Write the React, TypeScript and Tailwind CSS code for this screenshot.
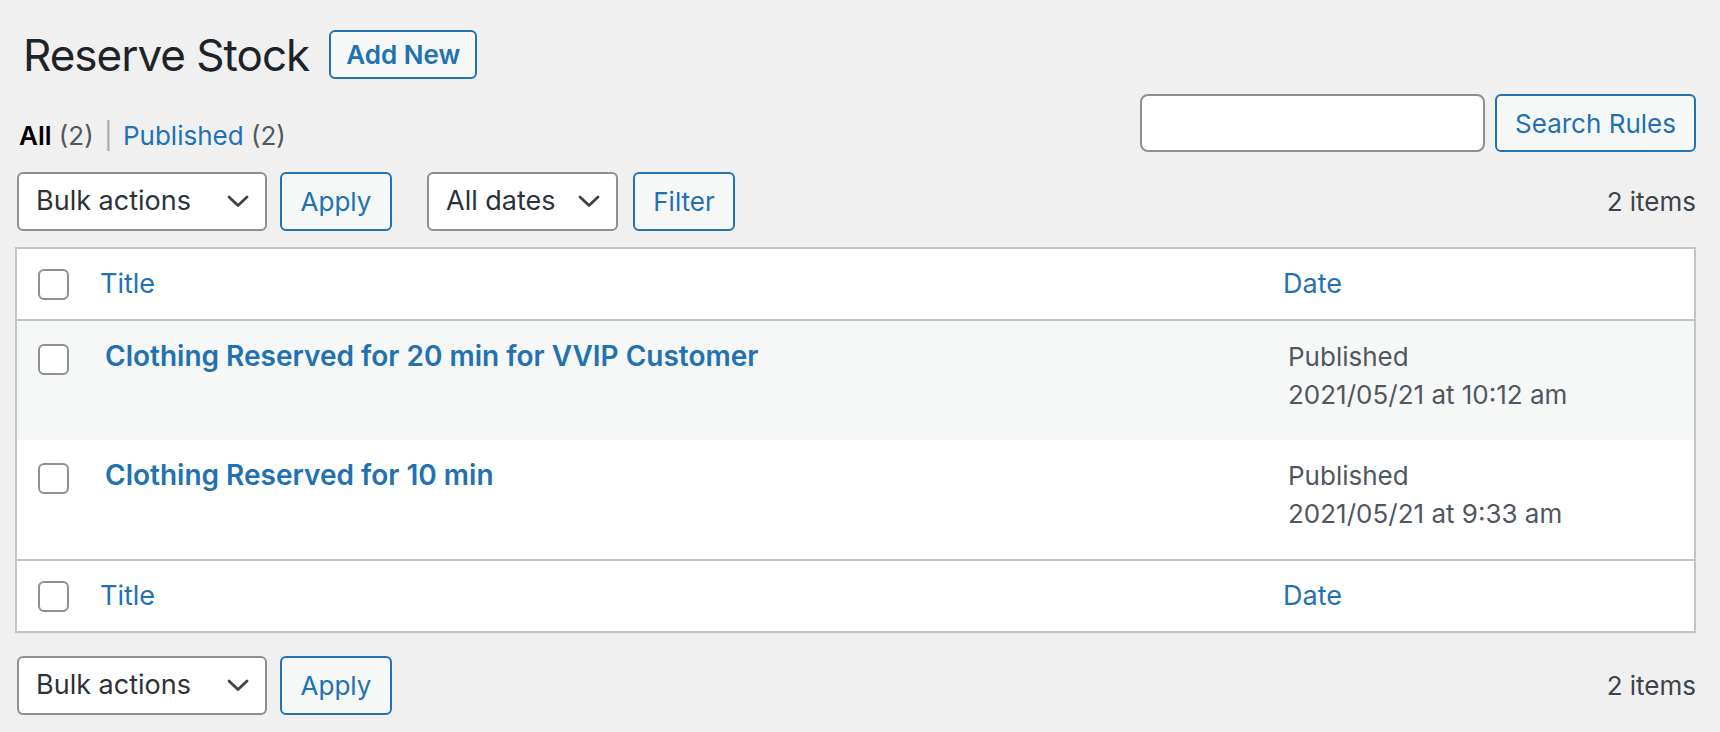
import React from 'react';

const font = { fontFamily: 'Inter, "Noto Sans", sans-serif' };

const Chevron = () => (
    <svg width="22" height="13" viewBox="0 0 22 13" fill="none" className="shrink-0">
        <polyline points="2,2 11,10.5 20,2" stroke="#3c434a" strokeWidth="2.8" strokeLinecap="round" strokeLinejoin="round" />
    </svg>
);

const Select = ({ label, width }: { label: string, width: string }) => (
    <div className={`${width} h-[59px] bg-white border-2 border-[#8c8f94] rounded-[6px] flex items-center justify-between pl-[17px] pr-[16px] text-[27px] text-[#2c3338]`}>
        <span>{label}</span>
        <Chevron />
    </div>
);

const Button = ({ label, width, height = 'h-[59px]' }: { label: string, width: string, height?: string }) => (
    <button className={`${width} ${height} bg-[#f6f7f7] border-2 border-[#2271b1] rounded-[6px] text-[26px] text-[#2271b1] flex items-center justify-center`}>
        {label}
    </button>
);

const Checkbox = () => (
    <div className="w-[31px] h-[31px] bg-white border-2 border-[#8c8f94] rounded-[6px]" />
);

const HeadRow = ({ border }: { border: 'top' | 'bottom' }) => (
    <div className={`flex items-center h-[72px] bg-white ${border === 'bottom' ? 'border-b-2' : 'border-t-2'} border-[#c3c4c7]`}>
        <div className="w-[83px] pl-[21px] flex items-center"><Checkbox /></div>
        <div className="flex-1 text-[27px] text-[#2271b1]">Title</div>
        <div className="w-[411px] text-[27px] text-[#2271b1]">Date</div>
    </div>
);

const Row = ({ title, date, alt }: { title: string, date: string, alt?: boolean }) => (
    <div className={`flex items-start h-[119px] ${alt ? 'bg-[#f6f7f7]' : 'bg-white'}`}>
        <div className="w-[83px] pl-[21px] pt-[23px]"><Checkbox /></div>
        <div className="flex-1 pl-[5px] pt-[16px] leading-[38px] text-[28px] font-semibold text-[#2271b1]">{title}</div>
        <div className="w-[411px] pl-[5px] pt-[17px] leading-[38px] text-[26px] text-[#50575e]">
            <div>Published</div>
            <div>{date}</div>
        </div>
    </div>
);

const App: React.FC = () => {
    return (
        <div className="min-h-screen w-full bg-[#f0f0f1] pl-[15px] pr-[24px] pb-[16px]" style={font}>
            <div className="flex items-center gap-[20px] pt-[30px] pl-[8px]">
                <h1 className="text-[44px] leading-[48px] tracking-[-1px] text-[#1d2327] font-normal">Reserve Stock</h1>
                <button className="w-[148px] h-[49px] bg-[#f6f7f7] border-2 border-[#2271b1] rounded-[6px] text-[26px] font-semibold text-[#2271b1]">
                    Add New
                </button>
            </div>

            <div className="flex justify-between items-start mt-[15px]">
                <div className="mt-[24px] pl-[4px] text-[26px] leading-[36px] text-[#50575e]">
                    <span className="font-semibold text-black">All</span> (2) <span className="text-[#a7aaad] px-[3px]">|</span> <span className="text-[#2271b1]">Published</span> (2)
                </div>
                <div className="flex gap-[10px]">
                    <div className="w-[345px] h-[58px] bg-white border-2 border-[#8c8f94] rounded-[8px]" />
                    <Button label="Search Rules" width="w-[201px]" height="h-[58px]" />
                </div>
            </div>

            <div className="flex items-center justify-between mt-[18px] h-[59px]">
                <div className="flex items-center">
                    <Select label="Bulk actions" width="w-[250px] ml-[2px]" />
                    <div className="ml-[13px]"><Button label="Apply" width="w-[112px]" /></div>
                    <div className="ml-[35px]"><Select label="All dates" width="w-[191px]" /></div>
                    <div className="ml-[15px]"><Button label="Filter" width="w-[102px]" /></div>
                </div>
                <div className="text-[26px] text-[#3c434a]">2 items</div>
            </div>

            <div className="mt-[16px] border-2 border-[#c3c4c7] bg-white shadow-[0_1px_1px_rgba(0,0,0,0.04)]">
                <HeadRow border="bottom" />
                <Row title="Clothing Reserved for 20 min for VVIP Customer" date="2021/05/21 at 10:12 am" alt />
                <Row title="Clothing Reserved for 10 min" date="2021/05/21 at 9:33 am" />
                <HeadRow border="top" />
            </div>

            <div className="flex items-center justify-between mt-[23px] h-[59px]">
                <div className="flex items-center">
                    <Select label="Bulk actions" width="w-[250px] ml-[2px]" />
                    <div className="ml-[13px]"><Button label="Apply" width="w-[112px]" /></div>
                </div>
                <div className="text-[26px] text-[#3c434a]">2 items</div>
            </div>
        </div>
    );
};

export default App;
